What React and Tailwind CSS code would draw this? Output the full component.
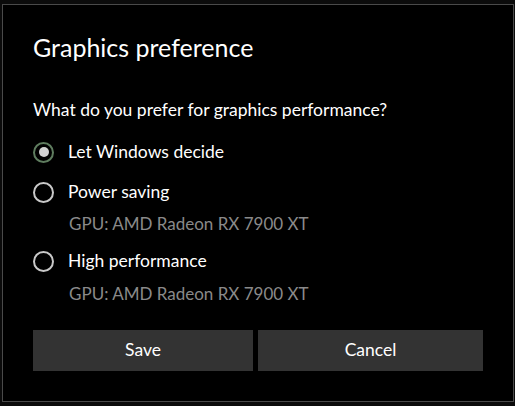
import React from "react";

const font = { fontFamily: 'Lato, "Noto Sans", sans-serif' };

const Radio = ({ checked }) => (
  <span
    className={
      "flex h-[21px] w-[21px] shrink-0 items-center justify-center rounded-full border-2 " +
      (checked ? "border-[#5f7d5f]" : "border-[#c9c9c9]")
    }
  >
    {checked && <span className="h-[10px] w-[10px] rounded-full bg-[#d2d2d2]" />}
  </span>
);

const Option = ({ label, gpu, checked, className, gpuGap }) => (
  <div className={className}>
    <label className="flex items-center gap-[14px] text-[17.5px] leading-[24px] text-white">
      <Radio checked={checked} />
      {label}
    </label>
    {gpu && (
      <div className={gpuGap + " pl-[36px] text-[17px] leading-[24px] text-[#8a8a8a]"}>
        GPU: {gpu}
      </div>
    )}
  </div>
);

export default function App() {
  return (
    <div className="min-h-screen bg-[#0b0b0b] pl-[2px] pt-[4px]" style={font}>
      <div className="h-[398px] w-[512px] border border-[#4a4a4a] bg-black px-[30px] pt-[26px]">
        <h1 className="text-[25px] leading-[32px] text-white">Graphics preference</h1>

        <p className="mt-[35px] text-[17.5px] leading-[24px] text-white">
          What do you prefer for graphics performance?
        </p>

        <Option className="mt-[18px]" label="Let Windows decide" checked />
        <Option
          className="mt-[16px]"
          label="Power saving"
          gpu="AMD Radeon RX 7900 XT"
          gpuGap="mt-[8px]"
        />
        <Option
          className="mt-[13px]"
          label="High performance"
          gpu="AMD Radeon RX 7900 XT"
          gpuGap="mt-[9px]"
        />

        <div className="mt-[24px] grid grid-cols-[220px_225px] gap-[5px]">
          <button className="h-[41px] bg-[#333333] text-[17.5px] text-white">Save</button>
          <button className="h-[41px] bg-[#333333] text-[17.5px] text-white">Cancel</button>
        </div>
      </div>
    </div>
  );
}
